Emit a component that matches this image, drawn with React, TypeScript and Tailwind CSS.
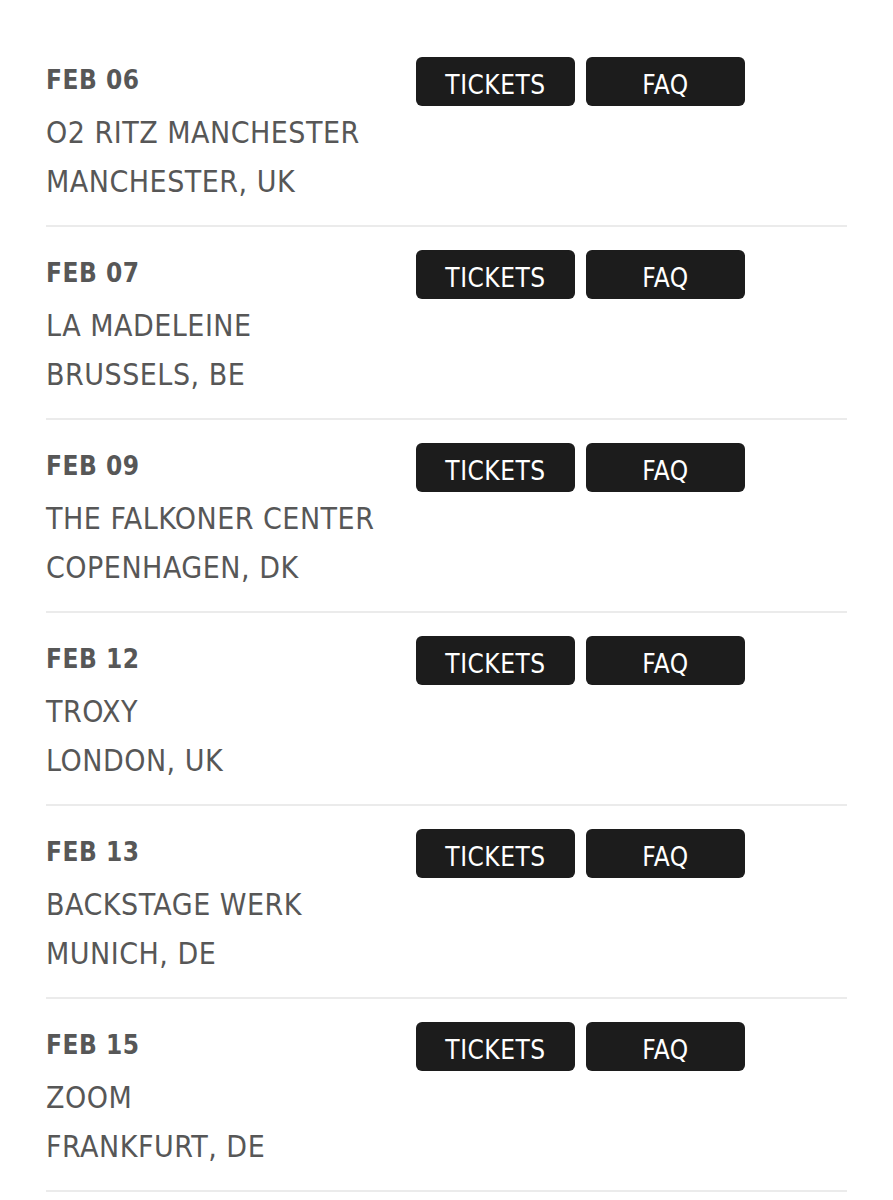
const shows = [
  { date: "FEB 06", venue: "O2 RITZ MANCHESTER", city: "MANCHESTER, UK" },
  { date: "FEB 07", venue: "LA MADELEINE", city: "BRUSSELS, BE" },
  { date: "FEB 09", venue: "THE FALKONER CENTER", city: "COPENHAGEN, DK" },
  { date: "FEB 12", venue: "TROXY", city: "LONDON, UK" },
  { date: "FEB 13", venue: "BACKSTAGE WERK", city: "MUNICH, DE" },
  { date: "FEB 15", venue: "ZOOM", city: "FRANKFURT, DE" },
];

const font = {
  fontFamily: '"DejaVu Sans Condensed", "Liberation Sans", sans-serif',
};

function ShowRow({ date, venue, city }: { date: string; venue: string; city: string }) {
  return (
    <div className="flex border-b-2 border-[#ebebeb] pt-[23px] pb-[19px]">
      <div className="w-[370px] whitespace-nowrap text-[#575757]">
        <div className="mt-[7px] text-[26px] font-bold leading-[32px] tracking-[0.5px]">{date}</div>
        <div className="mt-[12px] text-[30px] leading-[49px] tracking-[0.5px]">{venue}</div>
        <div className="text-[30px] leading-[49px] tracking-[0.5px]">{city}</div>
      </div>
      <div className="flex items-start gap-[11px]">
        <a href="#" className="flex h-[49px] w-[159px] items-center justify-center rounded-[6px] bg-[#1c1c1c] pt-[8px] text-[26px] tracking-[0.5px] text-white">
          TICKETS
        </a>
        <a href="#" className="flex h-[49px] w-[159px] items-center justify-center rounded-[6px] bg-[#1c1c1c] pt-[8px] text-[26px] tracking-[0.5px] text-white">
          FAQ
        </a>
      </div>
    </div>
  );
}

export default function App() {
  return (
    <div className="min-h-screen bg-white px-[46px] pt-[34px]" style={font}>
      <div className="w-[801px]">
        {shows.map((s) => (
          <ShowRow key={s.date} {...s} />
        ))}
      </div>
    </div>
  );
}
